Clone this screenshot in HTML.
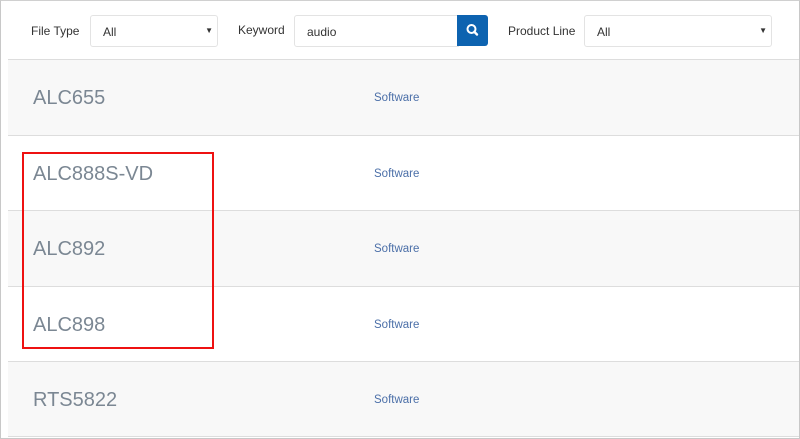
<!DOCTYPE html>
<html><head><style>
*{box-sizing:border-box;margin:0;padding:0}
body{width:800px;height:439px;overflow:hidden;background:#fff;font-family:"Liberation Sans",Arial,sans-serif;position:relative}
.frame{position:absolute;left:0;top:0;width:800px;height:439px;border:1px solid #c8c8c8;border-top:1px solid #d0d0d0}
.lbl{position:absolute;font-size:12px;color:#333}
.box{position:absolute;top:15px;height:32px;border:1px solid #e3e3e3;border-radius:3px;background:#fff;font-size:12px;color:#333;padding:9px 12px}
.arr{position:absolute;right:4px;top:10px;font-size:8px}
.row{position:absolute;left:8px;width:791px;height:76px;border-top:1px solid #ddd}
.g{background:#f8f8f8}
.name{position:absolute;left:25px;top:27px;font-size:20px;color:#7b8793}
.sw{position:absolute;left:366px;top:32px;font-size:11.5px;color:#4b6fa8}
</style></head><body>
<div class="lbl" style="left:31px;top:24px">File Type</div>
<div class="box" style="left:90px;width:128px">All<span class="arr">▼</span></div>
<div class="lbl" style="left:238px;top:23px">Keyword</div>
<div class="box" style="left:294px;width:165px;border-radius:3px 0 0 3px">audio</div>
<div style="position:absolute;left:457px;top:15px;width:31px;height:31px;background:#0d63b0;border-radius:0 3px 3px 0">
<svg width="31" height="31" viewBox="0 0 31 31"><circle cx="14.5" cy="14" r="4" fill="none" stroke="#fff" stroke-width="2"/><path d="M17.3 16.8L20 19.5" stroke="#fff" stroke-width="2.4" stroke-linecap="round"/></svg></div>
<div class="lbl" style="left:508px;top:24px">Product Line</div>
<div class="box" style="left:584px;width:188px">All<span class="arr">▼</span></div>
<div class="row g" style="top:59px"><div class="name">ALC655</div><div class="sw">Software</div></div>
<div class="row" style="top:135px"><div class="name">ALC888S-VD</div><div class="sw">Software</div></div>
<div class="row g" style="top:210px"><div class="name">ALC892</div><div class="sw">Software</div></div>
<div class="row" style="top:286px"><div class="name">ALC898</div><div class="sw">Software</div></div>
<div class="row g" style="top:361px;border-bottom:1px solid #ddd"><div class="name">RTS5822</div><div class="sw">Software</div></div>
<div style="position:absolute;left:22px;top:152px;width:192px;height:197px;border:2px solid #ee1111"></div>
<div class="frame"></div>
</body></html>
